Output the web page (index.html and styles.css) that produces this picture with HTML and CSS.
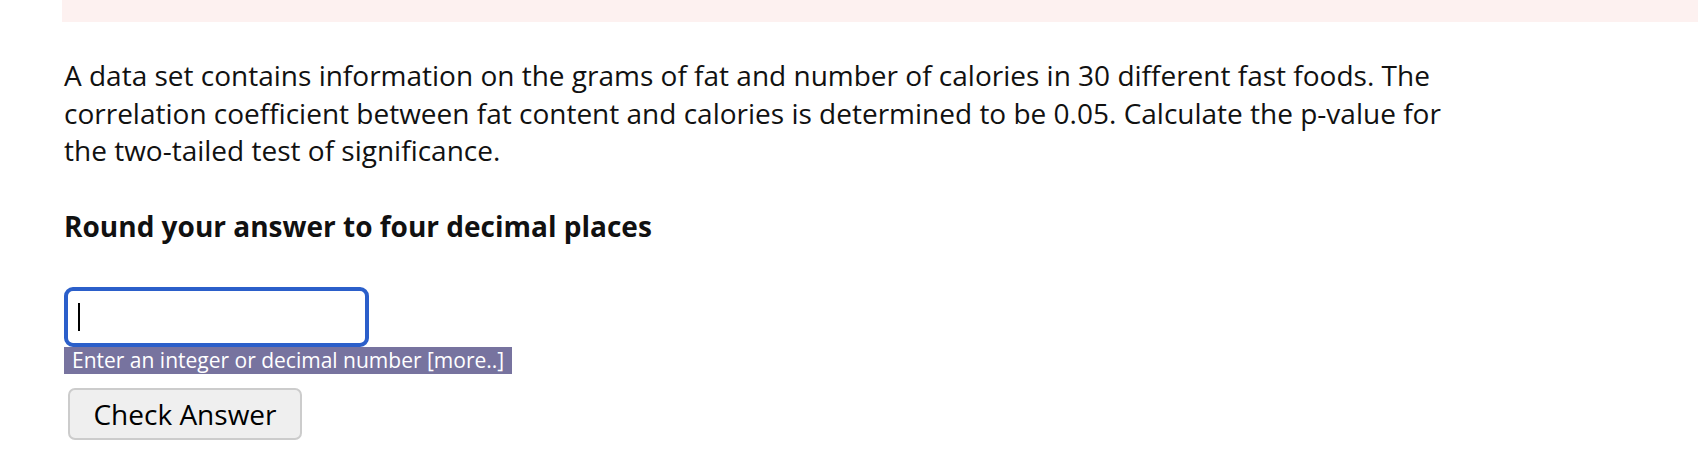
FILE: index.html
```html
<!DOCTYPE html>
<html lang="en">
<head>
    <meta charset="UTF-8">
    <meta name="viewport" content="width=device-width, initial-scale=1.0">
    <title>Question</title>
    <link rel="stylesheet" href="styles.css">
</head>
<body>

<!-- Notice strip at the top -->
<div class="notice"></div>

<div class="question">
    <p class="prompt">A data set contains information on the grams of fat and number of calories in 30 different fast foods. The correlation coefficient between fat content and calories is determined to be 0.05. Calculate the p-value for the two-tailed test of significance.</p>

    <p class="instruction">Round your answer to four decimal places</p>

    <div class="answer">
        <div class="answer-box">
            <span class="caret"></span>
        </div>
        <div class="hint">Enter an integer or decimal number [more..]</div>
        <button class="check">Check Answer</button>
    </div>
</div>

</body>
</html>
```

FILE: styles.css
```css
/* General Styling */
body {
    font-family: 'Open Sans', sans-serif;
    margin: 0;
    background: #fff;
    color: #111;
}

/* Pink strip */
.notice {
    margin-left: 62px;
    height: 22px;
    background-color: #fdf1f0;
}

/* Question text */
.question {
    padding-left: 64px;
    width: 1400px;
}
.prompt {
    font-size: 28px;
    line-height: 37.5px;
    margin: 35px 0 0 0;
}
.instruction {
    font-size: 28px;
    line-height: 37.5px;
    font-weight: bold;
    margin: 38.5px 0 0 0;
}

/* Answer area */
.answer {
    display: flex;
    flex-direction: column;
    align-items: flex-start;
    margin-top: 41px;
}
.answer-box {
    width: 287px;
    height: 52px;
    border: 4px solid #2b5fca;
    border-radius: 9px;
    background: #fff;
    display: flex;
    align-items: center;
    padding-left: 10px;
}
.caret {
    width: 2px;
    height: 28px;
    background: #000;
}
.hint {
    background-color: #77739f;
    color: #fff;
    font-size: 21px;
    line-height: 27px;
    padding: 0 7px 0 8px;
    width: 448px;
    box-sizing: border-box;
    white-space: nowrap;
}
.check {
    margin: 14px 0 0 4px;
    width: 234px;
    height: 52px;
    font-family: 'Open Sans', sans-serif;
    font-size: 28px;
    color: #000;
    background-color: #efefef;
    border: 2px solid #ccc;
    border-radius: 7px;
    padding: 0;
}
```
